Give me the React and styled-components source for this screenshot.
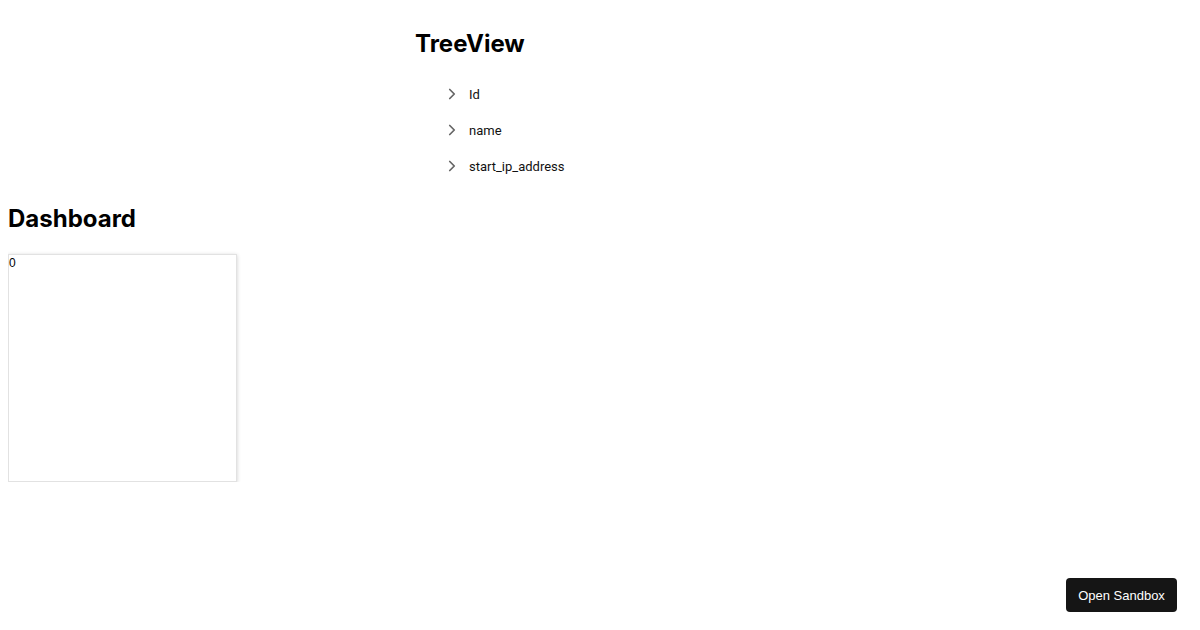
import styled, { createGlobalStyle } from 'styled-components';

const GlobalStyle = createGlobalStyle`
  body {
    margin: 8px;
    background: #ffffff;
    color: #000000;
    font-family: Roboto, "Liberation Sans", sans-serif;
  }
`;

const fields = ['Id', 'name', 'start_ip_address'];

const Chevron = () => (
  <svg width="18" height="18" viewBox="0 0 24 24" fill="none" stroke="#666" strokeWidth="2.3" strokeLinecap="round" strokeLinejoin="round">
    <path d="m9 18 6-6-6-6" />
  </svg>
);

const TreeItem = ({ label }) => (
  <TreeRow>
    <Chevron />
    <TreeLabel>{label}</TreeLabel>
  </TreeRow>
);

const App = () => {
  return (
    <>
      <GlobalStyle />
      <TreeSection>
        <Title>TreeView</Title>
        <TreeList>
          {fields.map((f) => (
            <TreeItem key={f} label={f} />
          ))}
        </TreeList>
      </TreeSection>
      <Title>Dashboard</Title>
      <Card>0</Card>
      <SandboxButton>Open Sandbox</SandboxButton>
    </>
  );
};

export default App;

const TreeSection = styled.section`
  width: 370px;
  margin: 0 auto;
  padding-top: 22px;
`;

const Title = styled.h2`
  margin: 0;
  font-family: Inter, "Liberation Sans", sans-serif;
  font-size: 24px;
  line-height: 28px;
  font-weight: 700;
`;

const TreeList = styled.ul`
  list-style: none;
  margin: 18px 0 21px;
  padding: 0 0 0 28px;
`;

const TreeRow = styled.li`
  display: flex;
  align-items: center;
  height: 36px;
  gap: 8px;
`;

const TreeLabel = styled.span`
  font-size: 13px;
  color: #111;
`;

const Card = styled.div`
  box-sizing: border-box;
  width: 229px;
  height: 228px;
  margin-top: 21px;
  border: 1px solid #e2e2e2;
  box-shadow: 0 1px 4px rgba(0, 0, 0, 0.2);
  font-family: "Liberation Sans", Arial, sans-serif;
  font-size: 12px;
  line-height: 16px;
`;

const SandboxButton = styled.button`
  position: fixed;
  right: 23px;
  bottom: 18px;
  width: 111px;
  height: 34px;
  border: none;
  border-radius: 4px;
  background: #151515;
  color: #ffffff;
  font-family: "Liberation Sans", Arial, sans-serif;
  font-size: 13px;
  cursor: pointer;
`;
